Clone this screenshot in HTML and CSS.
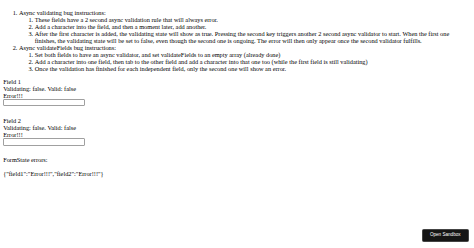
FILE: index.html
```html
<!DOCTYPE html>
<html>
<head>
<meta charset="utf-8">
<link rel="stylesheet" href="styles.css">
</head>
<body>
<ol class="steps">
  <li>Async validating bug instructions:
    <ol class="substeps">
      <li>These fields have a 2 second async validation rule that will always error.</li>
      <li>Add a character into the field, and then a moment later, add another.</li>
      <li>After the first character is added, the validating state will show as true. Pressing the second key triggers another 2 second async validator to start. When the first one finishes, the validating state will be set to false, even though the second one is ongoing. The error will then only appear once the second validator fulfills.</li>
    </ol>
  </li>
  <li>Async validateFields bug instructions:
    <ol class="substeps">
      <li>Set both fields to have an async validator, and set validateFields to an empty array (already done)</li>
      <li>Add a character into one field, then tab to the other field and add a character into that one too (while the first field is still validating)</li>
      <li>Once the validation has finished for each independent field, only the second one will show an error.</li>
    </ol>
  </li>
</ol>
<div class="field">
  <div>Field 1</div>
  <div>Validating: false. Valid: false</div>
  <div>Error!!!</div>
  <input class="input" type="text">
</div>
<div class="field">
  <div>Field 2</div>
  <div>Validating: false. Valid: false</div>
  <div>Error!!!</div>
  <input class="input" type="text">
</div>
<p class="para">FormState errors:</p>
<p class="para">{"field1":"Error!!!","field2":"Error!!!"}</p>
<button class="sandbox">Open Sandbox</button>
</body>
</html>
```
FILE: styles.css
```css
html {
  background: #ffffff;
}
body {
  margin: 3.16px;
  font-family: "Liberation Serif", "Times New Roman", serif;
  font-size: 6.32px;
  color: #000;
}
.steps {
  margin: 6.32px 0 5.6px;
  padding-left: 15.8px;
}
.substeps {
  margin: 0;
  padding-left: 15.8px;
}
.field {
  margin-bottom: 10.7px;
}
.input {
  display: block;
  box-sizing: border-box;
  width: 81.5px;
  height: 7.4px;
  margin: 0;
  padding: 0;
  border: 1px solid #a0a0a0;
  border-radius: 1px;
  background: #fff;
}
.para {
  margin: 6.32px 0;
}
.sandbox {
  position: fixed;
  right: 5px;
  bottom: 6.5px;
  width: 47.5px;
  height: 12.5px;
  padding: 0;
  border: 0.5px solid #444;
  border-radius: 1.5px;
  background: #151515;
  color: #fff;
  font-family: "Liberation Sans", Arial, sans-serif;
  font-size: 4.6px;
  line-height: 1;
}
```
